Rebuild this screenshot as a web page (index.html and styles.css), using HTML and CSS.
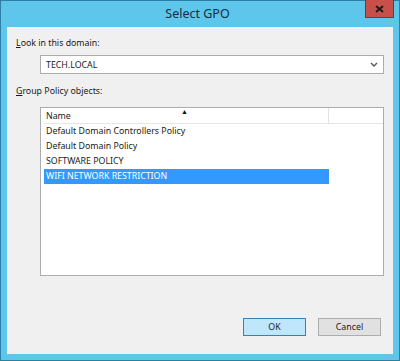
FILE: index.html
```html
<!DOCTYPE html>
<html lang="en">
<head>
    <meta charset="UTF-8">
    <title>Select GPO</title>
    <link rel="stylesheet" href="styles.css">
</head>
<body>
    <div class="window">
        <div class="titlebar">
            <span></span>
            <span class="title">Select GPO</span>
            <button class="close-btn">
                <svg width="9" height="8" viewBox="0 0 9 8"><path d="M1 1 L8 7 M8 1 L1 7" stroke="#1b1b1b" stroke-width="2"/></svg>
            </button>
        </div>

        <div class="client">
            <div class="label"><u>L</u>ook in this domain:</div>
            <div class="combo">
                <span>TECH.LOCAL</span>
                <svg width="8" height="5" viewBox="0 0 8 5"><path d="M1 1 L4 4 L7 1" stroke="#555" stroke-width="1.4" fill="none"/></svg>
            </div>

            <div class="label label-gap"><u>G</u>roup Policy objects:</div>
            <div class="list">
                <div class="list-header">
                    <div class="col-name">Name<span class="sort-arrow">&#9650;</span></div>
                    <div class="col-rest"></div>
                </div>
                <div class="row">Default Domain Controllers Policy</div>
                <div class="row">Default Domain Policy</div>
                <div class="row">SOFTWARE POLICY</div>
                <div class="row selected">WIFI NETWORK RESTRICTION</div>
            </div>

            <div class="buttons">
                <button class="btn btn-default">OK</button>
                <button class="btn">Cancel</button>
            </div>
        </div>
    </div>
</body>
</html>
```

FILE: styles.css
```css
/* Select GPO dialog */
* {
    box-sizing: border-box;
}

body {
    margin: 0;
    font-family: "Noto Sans", sans-serif;
    font-size: 8.8px;
    color: #1a1a1a;
}

.window {
    width: 400px;
    height: 361px;
    background-color: #5ec6ea;
    border: 1px solid #2f7ea3;
    display: flex;
    flex-direction: column;
}

.titlebar {
    height: 26px;
    display: grid;
    grid-template-columns: 1fr auto 1fr;
    align-items: start;
    padding-right: 5px;
}

.title {
    font-size: 12.5px;
    color: #122f45;
    padding-top: 4px;
}

.close-btn {
    justify-self: end;
    width: 29px;
    height: 18px;
    margin-top: -1px;
    background-color: #c7504a;
    border: 1px solid #8c2f2a;
    border-top: none;
    padding: 0;
    display: flex;
    align-items: center;
    justify-content: center;
}

.client {
    flex: 1;
    margin: 0 6px 6px 6px;
    background-color: #f0f0f0;
    padding: 10px 9px 0 9px;
    display: flex;
    flex-direction: column;
}

.label {
    height: 13px;
    line-height: 13px;
}

.label-gap {
    margin-top: 11px;
}

.combo {
    margin: 5px 0 0 24px;
    height: 19px;
    background-color: #fff;
    border: 1px solid #acacac;
    display: flex;
    align-items: center;
    justify-content: space-between;
    padding: 0 5px 0 5px;
}

.list {
    margin: 9px 0 0 24px;
    height: 169px;
    background-color: #fff;
    border: 1px solid #abadb3;
    padding-left: 3px;
}

.list-header {
    display: flex;
    height: 16px;
    border-bottom: 1px solid #e6e6e6;
}

.col-name {
    width: 285px;
    border-right: 1px solid #e3e3e3;
    padding-left: 2px;
    line-height: 16px;
    position: relative;
}

.sort-arrow {
    position: absolute;
    left: 137px;
    top: -4px;
    font-size: 7px;
    color: #111;
}

.row {
    width: 285px;
    height: 15px;
    line-height: 15px;
    padding-left: 2px;
}

.selected {
    background-color: #3399ff;
    color: #fff;
}

.buttons {
    display: flex;
    justify-content: flex-end;
    gap: 12px;
    margin-top: 42px;
    padding-right: 3px;
}

.btn {
    width: 63px;
    height: 18px;
    font-family: inherit;
    font-size: 8.8px;
    color: #1a1a1a;
    background-color: #e1e1e1;
    border: 1px solid #adadad;
    padding: 0;
}

.btn-default {
    background-color: #bee6fd;
    border-color: #3c7fb1;
}
```
